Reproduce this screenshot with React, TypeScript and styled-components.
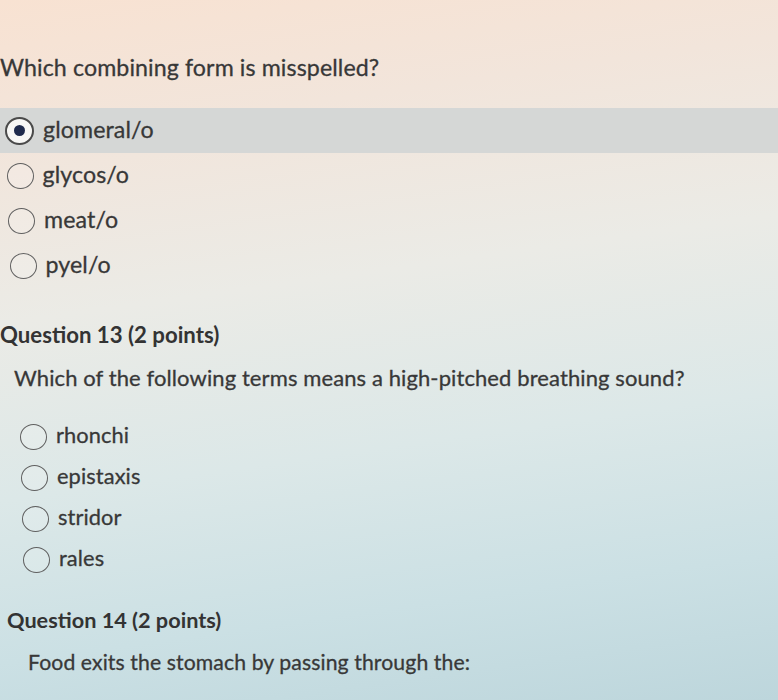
import styled, { createGlobalStyle } from 'styled-components';

const GlobalStyle = createGlobalStyle`
  html, body {
    margin: 0;
    padding: 0;
  }
  body {
    font-family: Lato, "Open Sans", sans-serif;
    color: #383838;
  }
`;

const Page = styled.div`
  width: 778px;
  height: 700px;
  overflow: hidden;
  background: linear-gradient(172deg, #f8e2d2 0%, #f2e5db 18%, #ebebe6 40%, #dce8e8 62%, #cbe0e4 82%, #bdd6dc 100%);
  box-sizing: border-box;
  padding-top: 54px;
`;

const Prompt = styled.div<{ $indent: number; $size: number; $gap?: number }>`
  font-size: ${(p) => p.$size}px;
  line-height: 26px;
  margin-top: ${(p) => p.$gap ?? 0}px;
  padding-left: ${(p) => p.$indent}px;
  white-space: nowrap;
  letter-spacing: 0.1px;
  -webkit-text-stroke: 0.3px #383838;
`;

const Heading = styled.div<{ $indent: number; $gap: number; $size: number }>`
  font-size: ${(p) => p.$size}px;
  font-weight: 700;
  line-height: 26px;
  margin-top: ${(p) => p.$gap}px;
  padding-left: ${(p) => p.$indent}px;
  color: #333;
`;

const OptionList = styled.div<{ $gap: number }>`
  display: flex;
  flex-direction: column;
  margin-top: ${(p) => p.$gap}px;
`;

const Option = styled.div<{ $selected?: boolean; $indent: number; $height: number; $size: number }>`
  display: flex;
  align-items: center;
  gap: 9px;
  height: ${(p) => p.$height}px;
  padding-left: ${(p) => p.$indent}px;
  background: ${(p) => (p.$selected ? '#d5d7d6' : 'transparent')};
  font-size: ${(p) => p.$size}px;
  letter-spacing: 0.1px;
  -webkit-text-stroke: 0.3px #383838;
`;

const Radio = styled.span<{ $selected?: boolean }>`
  width: 25px;
  height: 24px;
  border-radius: 50%;
  border: ${(p) => (p.$selected ? '2.5px solid #4a4a4a' : '1.5px solid #606060')};
  background: ${(p) => (p.$selected ? '#f7f7f5' : 'rgba(255,255,255,0.15)')};
  flex-shrink: 0;
  display: flex;
  align-items: center;
  justify-content: center;

  &::after {
    content: '';
    display: ${(p) => (p.$selected ? 'block' : 'none')};
    width: 11px;
    height: 11px;
    border-radius: 50%;
    background: #1e2a4c;
  }
`;

const Label = styled.span`
  line-height: 26px;
  margin-top: -4px;
`;

type Opt = { text: string; selected?: boolean };

const first: Opt[] = [
  { text: 'glomeral/o', selected: true },
  { text: 'glycos/o' },
  { text: 'meat/o' },
  { text: 'pyel/o' },
];

const second: Opt[] = [
  { text: 'rhonchi' },
  { text: 'epistaxis' },
  { text: 'stridor' },
  { text: 'rales' },
];

export default function App() {
  return (
    <Page>
      <GlobalStyle />
      <Prompt $indent={0} $size={23.2}>Which combining form is misspelled?</Prompt>
      <OptionList $gap={28}>
        {first.map((o, i) => (
          <Option key={o.text} $selected={o.selected} $indent={5 + i * 1.5} $height={45} $size={23.2}>
            <Radio $selected={o.selected} />
            <Label>{o.text}</Label>
          </Option>
        ))}
      </OptionList>

      <Heading $indent={0} $gap={34} $size={22.2}>Question 13 (2 points)</Heading>
      <Prompt $indent={14} $size={22} $gap={17}>
        Which of the following terms means a high-pitched breathing sound?
      </Prompt>
      <OptionList $gap={25}>
        {second.map((o, i) => (
          <Option key={o.text} $indent={20 + i} $height={41} $size={21.8}>
            <Radio />
            <Label>{o.text}</Label>
          </Option>
        ))}
      </OptionList>

      <Heading $indent={7} $gap={27} $size={21.7}>Question 14 (2 points)</Heading>
      <Prompt $indent={28} $size={21.2} $gap={16}>
        Food exits the stomach by passing through the:
      </Prompt>
    </Page>
  );
}
